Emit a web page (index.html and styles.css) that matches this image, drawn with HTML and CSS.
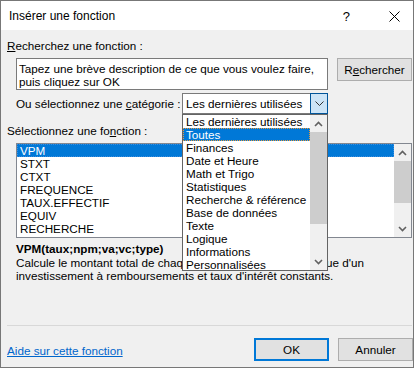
FILE: index.html
```html
<!DOCTYPE html>
<html lang="fr">
<head>
<meta charset="utf-8">
<title>Insérer une fonction</title>
<link rel="stylesheet" href="styles.css">
</head>
<body>
<div class="dialog">
  <div class="titlebar">
    <span class="title">Insérer une fonction</span>
    <span class="help">?</span>
    <svg class="close" width="11" height="11" viewBox="0 0 11 11"><path d="M0.5 0.5 L10.5 10.5 M10.5 0.5 L0.5 10.5" stroke="#000" stroke-width="1" fill="none"/></svg>
  </div>
  <div class="content">
    <div class="label"><u>R</u>echerchez une fonction :</div>
    <div class="search-row">
      <div class="search-box">Tapez une brève description de ce que vous voulez faire,<br>puis cliquez sur OK</div>
      <div class="btn">R<u>e</u>chercher</div>
    </div>
    <div class="cat-row">
      <span class="cat-label">Ou sélectionnez une <u>c</u>atégorie :</span>
      <div class="combo">
        <span class="combo-text">Les dernières utilisées</span>
        <span class="combo-btn"><svg width="9" height="5" viewBox="0 0 9 5"><polyline points="0.5,0.5 4.5,4.5 8.5,0.5" stroke="#333" stroke-width="1" fill="none"/></svg></span>
        <div class="droplist">
          <ul class="items">
            <li>Les dernières utilisées</li>
            <li class="sel">Toutes</li>
            <li>Finances</li>
            <li>Date et Heure</li>
            <li>Math et Trigo</li>
            <li>Statistiques</li>
            <li>Recherche &amp; référence</li>
            <li>Base de données</li>
            <li>Texte</li>
            <li>Logique</li>
            <li>Informations</li>
            <li>Personnalisées</li>
          </ul>
          <div class="scrollbar drop-sb">
            <span class="arrow"><svg width="9" height="6" viewBox="0 0 9 6"><polyline points="1,5 4.5,1.5 8,5" stroke="#606060" stroke-width="1.6" fill="none"/></svg></span>
            <span class="thumb"></span>
            <span class="track"></span>
            <span class="arrow"><svg width="9" height="6" viewBox="0 0 9 6"><polyline points="1,1 4.5,4.5 8,1" stroke="#606060" stroke-width="1.6" fill="none"/></svg></span>
          </div>
        </div>
      </div>
    </div>
    <div class="label label2">Sélectionnez une fo<u>n</u>ction :</div>
    <div class="funclist">
      <ul class="items">
        <li class="sel">VPM</li>
        <li>STXT</li>
        <li>CTXT</li>
        <li>FREQUENCE</li>
        <li>TAUX.EFFECTIF</li>
        <li>EQUIV</li>
        <li>RECHERCHE</li>
      </ul>
      <div class="scrollbar func-sb">
        <span class="arrow"><svg width="9" height="6" viewBox="0 0 9 6"><polyline points="1,5 4.5,1.5 8,5" stroke="#606060" stroke-width="1.6" fill="none"/></svg></span>
        <span class="thumb"></span>
        <span class="track"></span>
        <span class="arrow"><svg width="9" height="6" viewBox="0 0 9 6"><polyline points="1,1 4.5,4.5 8,1" stroke="#606060" stroke-width="1.6" fill="none"/></svg></span>
      </div>
    </div>
    <div class="syntax">VPM(taux;npm;va;vc;type)</div>
    <div class="desc">Calcule le montant total de chaque remboursement périodique d'un<br>investissement à remboursements et taux d'intérêt constants.</div>
    <div class="sep"></div>
    <div class="footer">
      <a class="link" href="#">Aide sur cette fonction</a>
      <div class="btn ok">OK</div>
      <div class="btn cancel">Annuler</div>
    </div>
  </div>
</div>
</body>
</html>
```

FILE: styles.css
```css
* { box-sizing: border-box; }
html, body { margin: 0; padding: 0; }
body {
  width: 419px;
  height: 369px;
  background: #ffffff;
  font-family: "Liberation Sans", Arial, sans-serif;
  font-size: 11.7px;
  color: #000;
  overflow: hidden;
}
.dialog {
  width: 414px;
  height: 368px;
  border: 1px solid #777;
  display: flex;
  flex-direction: column;
  background: #f0f0f0;
}
.titlebar {
  height: 29px;
  background: #fff;
  display: flex;
  align-items: center;
  padding-left: 8px;
  flex-shrink: 0;
}
.title {
  font-size: 12px;
  flex: 1;
  padding-top: 1px;
}
.help {
  font-size: 13px;
  margin-right: 39px;
  padding-top: 1px;
}
.close {
  margin-right: 13px;
  margin-top: 2px;
}
.content {
  flex: 1;
  display: flex;
  flex-direction: column;
  padding: 0 0 6px 6px;
}
.label {
  margin-top: 8px;
  line-height: 15px;
  height: 15px;
  white-space: nowrap;
}
.label2 { margin-top: 9px; }
u { text-decoration: underline; text-underline-offset: 1px; }
.search-row {
  display: flex;
  margin-top: 5px;
  margin-left: 9px;
  height: 32px;
}
.search-box {
  width: 312px;
  height: 32px;
  background: #fff;
  border: 1px solid #7a7a7a;
  padding: 3px 0 0 2px;
  line-height: 13px;
  white-space: nowrap;
}
.btn {
  width: 75px;
  height: 23px;
  background: #e1e1e1;
  border: 1px solid #adadad;
  display: flex;
  align-items: center;
  justify-content: center;
  margin-left: 9px;
}
.cat-row {
  display: flex;
  align-items: center;
  margin-top: 3px;
  margin-left: 9px;
  height: 21px;
}
.cat-label {
  width: 166px;
  flex-shrink: 0;
  white-space: nowrap;
}
.combo {
  position: relative;
  width: 146px;
  height: 21px;
  background: #fff;
  border: 1px solid #7a7a7a;
  display: flex;
  align-items: center;
}
.combo-text {
  flex: 1;
  padding-left: 3px;
  white-space: nowrap;
}
.combo-btn {
  width: 18px;
  height: 21px;
  margin: -1px -1px -1px 0;
  background: #cce4f7;
  border: 1px solid #005499;
  display: flex;
  align-items: center;
  justify-content: center;
}
.droplist {
  position: absolute;
  left: -1px;
  top: 20px;
  width: 146px;
  height: 157px;
  background: #fff;
  border: 1px solid #646464;
  display: flex;
  z-index: 5;
}
.items {
  list-style: none;
  margin: 0;
  padding: 0;
  flex: 1;
}
.items li {
  height: 13px;
  line-height: 13px;
  padding-left: 3px;
  white-space: nowrap;
}
.items li.sel {
  background: #0078d7;
  color: #fff;
  outline: 1px dotted #e89a3c;
  outline-offset: -1px;
}
.scrollbar {
  width: 17px;
  background: #f0f0f0;
  display: flex;
  flex-direction: column;
  flex-shrink: 0;
}
.scrollbar .arrow {
  height: 17px;
  display: flex;
  align-items: center;
  justify-content: center;
  flex-shrink: 0;
}
.scrollbar .thumb {
  background: #cdcdcd;
  flex-shrink: 0;
}
.scrollbar .track { flex: 1; }
.drop-sb .thumb { height: 92px; }
.func-sb .thumb { height: 42px; }
.funclist {
  margin-top: 5px;
  margin-left: 9px;
  width: 396px;
  height: 95px;
  background: #fff;
  border: 1px solid #828790;
  display: flex;
}
.funclist .items li { padding-left: 3px; }
.funclist .items li.sel { outline-color: #3a8ee0; }
.syntax {
  margin-top: 3px;
  margin-left: 9px;
  font-weight: bold;
  line-height: 15px;
}
.desc {
  margin-left: 9px;
  line-height: 13px;
  white-space: nowrap;
}
.sep {
  margin-top: auto;
  width: 405px;
  height: 1px;
  background: #d8d8d8;
}
.footer {
  margin-top: 12px;
  display: flex;
  align-items: center;
  height: 23px;
}
.link {
  color: #0066cc;
  text-decoration: underline;
  flex: 1;
  padding-top: 1px;
}
.btn.ok {
  border: 2px solid #0078d7;
  margin-left: 0;
}
.btn.cancel { margin-left: 9px; }
```
